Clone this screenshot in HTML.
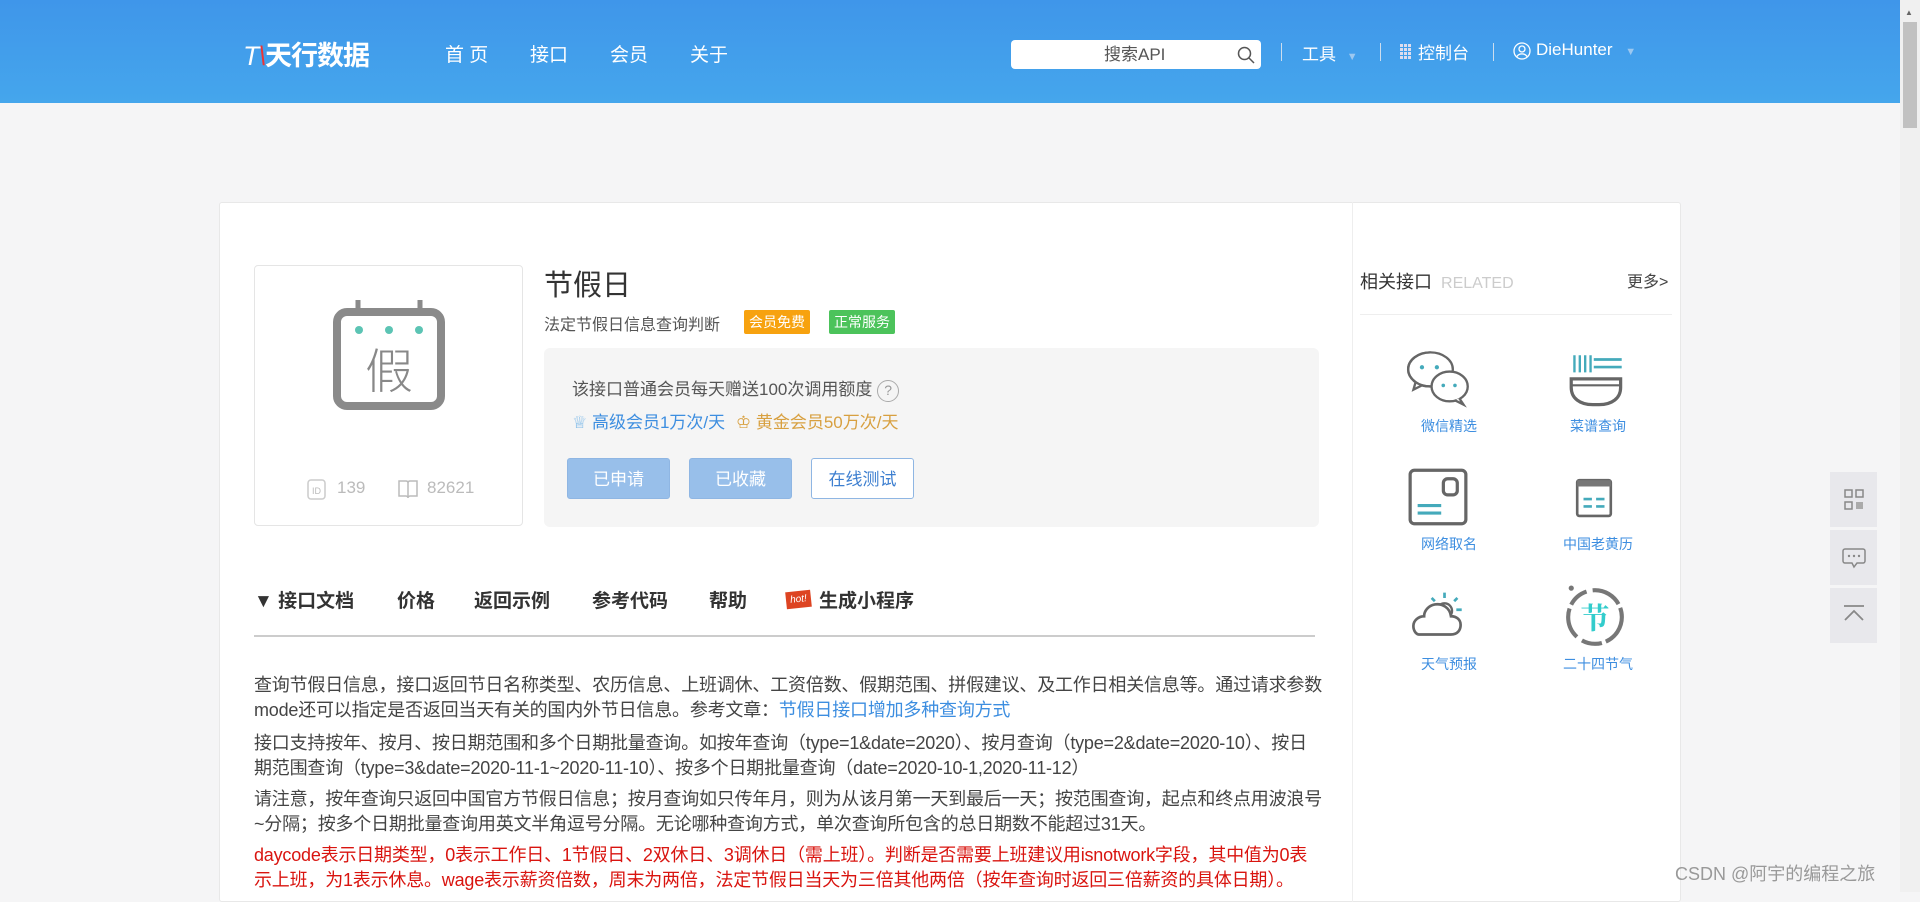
<!DOCTYPE html>
<html><head><meta charset="utf-8">
<style>
*{margin:0;padding:0;box-sizing:border-box}
body{width:1920px;height:892px;overflow:hidden;background:#f5f5f6;font-family:"Liberation Sans","Noto Sans CJK SC",sans-serif;color:#333;position:relative}
.hd{position:absolute;left:0;top:0;width:1900px;height:103px;background:linear-gradient(180deg,#3f96ea,#45a6ec);color:#fff}
.abs{position:absolute}
.nav{font-size:19px;top:40px}
.sb{position:absolute;left:1900px;top:0;width:20px;height:892px;background:#f0f0f0}
.sb .th{position:absolute;left:3px;top:22px;width:14px;height:106px;background:#c1c1c1}
.card{position:absolute;left:219px;top:202px;width:1462px;height:700px;background:#fff;border:1px solid #e8e8e8;border-radius:3px}
.side{position:absolute;left:1352px;top:202px;width:1px;height:700px;background:#eee}
.btn{position:absolute;top:458px;height:41px;width:103px;border-radius:3px;font-size:17px;text-align:center;line-height:41px}
.tab{position:absolute;top:586px;font-size:19px;font-weight:bold;color:#333}
p.t{position:absolute;left:254px;width:1070px;font-size:18px;line-height:25px;color:#444;letter-spacing:-0.2px}
.ri{position:absolute;font-size:14px;color:#3d8ee0;text-align:center;width:120px}
.fb{position:absolute;left:1830px;width:47px;height:55px;background:#e8e8ec}
</style></head><body>
<div class="hd">
 <div class="abs" style="left:243px;top:34px;font-size:27px;font-weight:bold;letter-spacing:-1px"><span style="font-style:italic;font-weight:normal">T</span><span style="color:#e33;font-style:italic;font-weight:normal">\</span>天行数据</div>
 <div class="abs nav" style="left:445px">首 页</div>
 <div class="abs nav" style="left:530px">接口</div>
 <div class="abs nav" style="left:610px">会员</div>
 <div class="abs nav" style="left:690px">关于</div>
 <div class="abs" style="left:1011px;top:40px;width:250px;height:29px;background:#fff;border-radius:4px;color:#555;font-size:17px;line-height:29px;padding-left:93px">搜索API
  <svg class="abs" style="right:6px;top:6px" width="18" height="18" viewBox="0 0 18 18"><circle cx="7.5" cy="7.5" r="6" fill="none" stroke="#555" stroke-width="1.5"/><path d="M12 12l5 5" stroke="#555" stroke-width="1.5"/></svg></div>
 <div class="abs" style="left:1281px;top:43px;width:1px;height:18px;background:#cde"></div>
 <div class="abs" style="left:1302px;top:40px;font-size:17px">工具 <span style="font-size:11px;color:#9cc8f0;margin-left:6px">▼</span></div>
 <div class="abs" style="left:1380px;top:43px;width:1px;height:18px;background:#cde"></div>
 <svg class="abs" style="left:1400px;top:44px" width="12" height="16"><g fill="#dde"><rect x="0" y="0" width="3" height="3"/><rect x="4" y="0" width="3" height="3"/><rect x="8" y="0" width="3" height="3"/><rect x="0" y="4" width="3" height="3"/><rect x="4" y="4" width="3" height="3"/><rect x="8" y="4" width="3" height="3"/><rect x="0" y="8" width="3" height="3"/><rect x="4" y="8" width="3" height="3"/><rect x="8" y="8" width="3" height="3"/><rect x="0" y="12" width="3" height="3"/><rect x="4" y="12" width="3" height="3"/><rect x="8" y="12" width="3" height="3"/></g></svg>
 <div class="abs" style="left:1418px;top:39px;font-size:17px">控制台</div>
 <div class="abs" style="left:1493px;top:43px;width:1px;height:18px;background:#cde"></div>
 <svg class="abs" style="left:1513px;top:42px" width="18" height="18"><circle cx="9" cy="9" r="8" fill="none" stroke="#fff" stroke-width="1.3"/><circle cx="9" cy="7" r="3" fill="none" stroke="#fff" stroke-width="1.3"/><path d="M4 14.5c2-3.5 8-3.5 10 0" fill="none" stroke="#fff" stroke-width="1.3"/></svg>
 <div class="abs" style="left:1536px;top:40px;font-size:17px">DieHunter <span style="font-size:11px;color:#9cc8f0;margin-left:8px">▼</span></div>
</div>
<div class="sb"><div class="abs" style="left:5px;top:8px;font-size:8px;color:#666">▲</div><div class="th"></div></div>

<div class="card"></div>
<div class="side"></div>

<div class="abs" style="left:254px;top:265px;width:269px;height:261px;border:1px solid #e5e5e5;border-radius:4px;background:#fff"></div>
<svg class="abs" style="left:333px;top:296px" width="112" height="114" viewBox="0 0 112 114">
 <rect x="4" y="16" width="104" height="94" rx="10" fill="none" stroke="#8a8a8a" stroke-width="8"/>
 <path d="M25 4v16M87 4v16" stroke="#8a8a8a" stroke-width="5"/>
 <circle cx="26" cy="34" r="4" fill="#5cc4b4"/><circle cx="56" cy="34" r="4" fill="#5cc4b4"/><circle cx="86" cy="34" r="4" fill="#5cc4b4"/>
 <text x="56" y="92" font-size="48" text-anchor="middle" fill="#888" font-family="Noto Sans CJK SC" font-weight="300">假</text>
</svg>
<svg class="abs" style="left:307px;top:479px" width="20" height="22"><rect x="1" y="1" width="17" height="19" rx="3" fill="none" stroke="#ccc" stroke-width="1.5"/><text x="9.5" y="15" font-size="9" text-anchor="middle" fill="#bbb">ID</text></svg>
<div class="abs" style="left:337px;top:478px;font-size:17px;color:#bbb">139</div>
<svg class="abs" style="left:397px;top:479px" width="22" height="20"><path d="M2 2h7c1.5 0 2 1 2 2v15c0-1-1-2-2-2H2zM20 2h-7c-1.5 0-2 1-2 2v15c0-1 1-2 2-2h7z" fill="none" stroke="#bbb" stroke-width="1.5"/></svg>
<div class="abs" style="left:427px;top:478px;font-size:17px;color:#bbb">82621</div>

<div class="abs" style="left:544px;top:262px;font-size:29px;color:#333">节假日</div>
<div class="abs" style="left:544px;top:311px;font-size:16px;color:#555">法定节假日信息查询判断</div>
<div class="abs" style="left:744px;top:310px;height:24px;padding:0 5px;background:#f7a20f;color:#fff;font-size:14px;line-height:24px;border-radius:2px">会员免费</div>
<div class="abs" style="left:829px;top:310px;height:24px;padding:0 5px;background:#4cc35b;color:#fff;font-size:14px;line-height:24px;border-radius:2px">正常服务</div>

<div class="abs" style="left:544px;top:348px;width:775px;height:179px;background:#f5f5f5;border-radius:6px"></div>
<div class="abs" style="left:572px;top:375px;font-size:17px;color:#555">该接口普通会员每天赠送100次调用额度 <span style="display:inline-block;width:22px;height:22px;border:1.5px solid #aaa;border-radius:50%;font-size:14px;text-align:center;line-height:19px;color:#999;vertical-align:middle">?</span></div>
<div class="abs" style="left:572px;top:408px;font-size:17px;color:#3d8ee0"><span style="color:#7ab8e8">♕</span> 高级会员1万次/天 <span style="color:#d8a040;margin-left:6px">♔ 黄金会员50万次/天</span></div>
<div class="btn" style="left:567px;background:#98bfea;color:#fff;border:1px solid #8fb6e3">已申请</div>
<div class="btn" style="left:689px;background:#98bfea;color:#fff;border:1px solid #8fb6e3">已收藏</div>
<div class="btn" style="left:811px;background:#fff;color:#3d7fd0;border:1px solid #8fb6e3">在线测试</div>

<div class="tab" style="left:254px">▼ 接口文档</div>
<div class="tab" style="left:397px">价格</div>
<div class="tab" style="left:474px">返回示例</div>
<div class="tab" style="left:592px">参考代码</div>
<div class="tab" style="left:709px">帮助</div>
<div class="abs" style="left:786px;top:591px;width:25px;height:17px;background:#d42;color:#fff;font-size:10px;font-style:italic;line-height:17px;text-align:center;transform:rotate(-6deg)">hot!</div>
<div class="tab" style="left:819px">生成小程序</div>
<div class="abs" style="left:254px;top:635px;width:1061px;height:2px;background:#ccc"></div>

<p class="t" style="top:673px">查询节假日信息，接口返回节日名称类型、农历信息、上班调休、工资倍数、假期范围、拼假建议、及工作日相关信息等。通过请求参数mode还可以指定是否返回当天有关的国内外节日信息。参考文章：<span style="color:#3d8ee0">节假日接口增加多种查询方式</span></p>
<p class="t" style="top:731px">接口支持按年、按月、按日期范围和多个日期批量查询。如按年查询（type=1&amp;date=2020）、按月查询（type=2&amp;date=2020-10）、按日期范围查询（type=3&amp;date=2020-11-1~2020-11-10）、按多个日期批量查询（date=2020-10-1,2020-11-12）</p>
<p class="t" style="top:787px">请注意，按年查询只返回中国官方节假日信息；按月查询如只传年月，则为从该月第一天到最后一天；按范围查询，起点和终点用波浪号~分隔；按多个日期批量查询用英文半角逗号分隔。无论哪种查询方式，单次查询所包含的总日期数不能超过31天。</p>
<p class="t" style="top:843px;color:#d9140f">daycode表示日期类型，0表示工作日、1节假日、2双休日、3调休日（需上班）。判断是否需要上班建议用isnotwork字段，其中值为0表示上班，为1表示休息。wage表示薪资倍数，周末为两倍，法定节假日当天为三倍其他两倍（按年查询时返回三倍薪资的具体日期）。</p>

<div class="abs" style="left:1360px;top:268px;font-size:18px;color:#333">相关接口 <span style="color:#ccc;font-size:16px;margin-left:4px">RELATED</span></div>
<div class="abs" style="left:1627px;top:268px;font-size:16px;color:#444">更多&gt;</div>
<div class="abs" style="left:1360px;top:314px;width:312px;height:1px;background:#eee"></div>

<svg class="abs" style="left:1406px;top:350px" width="66" height="58" viewBox="0 0 62 54"><path d="M23 2C11 2 2 9 2 18c0 5 3 9 7 12l-2 7 8-4c3 1 5 1 8 1" fill="none" stroke="#666" stroke-width="2.2"/><ellipse cx="23" cy="18" rx="21" ry="16" fill="none" stroke="#666" stroke-width="2.2"/><ellipse cx="41" cy="34" rx="17" ry="14" fill="#fff" stroke="#666" stroke-width="2.2"/><path d="M50 45l4 6-8-4" fill="#fff" stroke="#666" stroke-width="2.2"/><circle cx="15" cy="16" r="2" fill="#4ab"/><circle cx="29" cy="16" r="2" fill="#4ab"/><circle cx="35" cy="33" r="1.7" fill="#4ab"/><circle cx="46" cy="33" r="1.7" fill="#4ab"/></svg>
<div class="ri" style="left:1389px;top:416px">微信精选</div>
<svg class="abs" style="left:1568px;top:353px" width="58" height="56" viewBox="0 0 54 52"><path d="M6 2v16M11 2v16M16 2v16M21 2v16" stroke="#4ab" stroke-width="2.2"/><path d="M24 6h26M24 13h26" stroke="#4ab" stroke-width="2.5"/><path d="M3 24h46v8c0 10-8 16-20 16h-6C11 48 3 42 3 32z" fill="none" stroke="#666" stroke-width="3"/><path d="M3 30h46" stroke="#666" stroke-width="2"/></svg>
<div class="ri" style="left:1538px;top:416px">菜谱查询</div>

<svg class="abs" style="left:1408px;top:468px" width="60" height="58" viewBox="0 0 56 54"><rect x="2" y="2" width="52" height="50" rx="4" fill="none" stroke="#666" stroke-width="3"/><rect x="33" y="10" width="13" height="15" rx="4" fill="none" stroke="#666" stroke-width="3"/><path d="M9 35h22M9 42h22" stroke="#4ab" stroke-width="3"/></svg>
<div class="ri" style="left:1389px;top:534px">网络取名</div>
<svg class="abs" style="left:1575px;top:476px" width="38" height="42" viewBox="0 0 36 40"><rect x="2" y="4" width="32" height="34" rx="2" fill="none" stroke="#666" stroke-width="2.5"/><rect x="2" y="4" width="32" height="6" fill="#777"/><path d="M8 22h8M20 22h8M8 29h8M20 29h8" stroke="#4ab" stroke-width="2.5"/></svg>
<div class="ri" style="left:1538px;top:534px">中国老黄历</div>

<svg class="abs" style="left:1408px;top:588px" width="58" height="50" viewBox="0 0 54 46"><path d="M34 4v5M22 9l3 3M46 9l-3 3M50 20h-5" stroke="#4ab" stroke-width="2.5"/><circle cx="34" cy="21" r="7" fill="none" stroke="#666" stroke-width="2.2"/><path d="M10 43h30c6 0 9-4 9-9s-4-8-9-8c-1-8-8-12-15-11-6 1-10 6-10 11-5 0-10 4-10 9s3 8 5 8z" fill="#fff" stroke="#666" stroke-width="2.5"/></svg>
<div class="ri" style="left:1389px;top:654px">天气预报</div>
<svg class="abs" style="left:1564px;top:584px" width="62" height="64" viewBox="0 0 60 62"><circle cx="30" cy="32" r="26" fill="none" stroke="#777" stroke-width="4" stroke-dasharray="30 4 20 6"/><circle cx="7" cy="4" r="2.5" fill="#777"/><text x="30" y="43" font-size="28" text-anchor="middle" fill="#3cc" font-family="Noto Serif CJK SC" font-weight="bold">节</text></svg>
<div class="ri" style="left:1538px;top:654px">二十四节气</div>

<div class="fb" style="top:472px"><svg class="abs" style="left:14px;top:17px" width="20" height="22"><g fill="none" stroke="#888" stroke-width="1.5"><rect x="1" y="1" width="7" height="7"/><rect x="12" y="1" width="7" height="7"/><rect x="1" y="13" width="7" height="7"/></g><rect x="12" y="13" width="7" height="7" fill="#aaa"/></svg></div>
<div class="fb" style="top:530px"><svg class="abs" style="left:12px;top:17px" width="24" height="22"><path d="M3 2h18a2 2 0 012 2v10a2 2 0 01-2 2h-6l-3 4-2-4H3a2 2 0 01-2-2V4a2 2 0 012-2z" fill="none" stroke="#888" stroke-width="1.5"/><circle cx="7" cy="9" r="1.2" fill="#888"/><circle cx="12" cy="9" r="1.2" fill="#888"/><circle cx="17" cy="9" r="1.2" fill="#888"/></svg></div>
<div class="fb" style="top:588px"><svg class="abs" style="left:12px;top:16px" width="24" height="20"><path d="M2 2h20M3 16l9-9 9 9" fill="none" stroke="#888" stroke-width="1.8"/></svg></div>

<div class="abs" style="left:1675px;top:860px;font-size:18px;color:#999">CSDN @阿宇的编程之旅</div>
</body></html>
